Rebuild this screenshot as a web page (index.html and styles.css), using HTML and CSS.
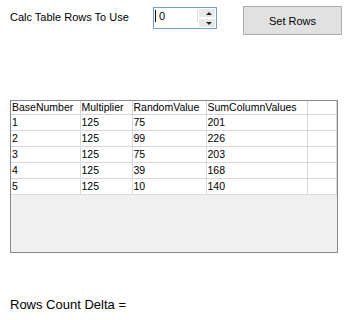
FILE: index.html
```html
<!DOCTYPE html>
<html lang="en">
<head>
  <meta charset="UTF-8" />
  <title>Calc Table</title>
  <link rel="stylesheet" href="styles.css">
</head>
<body>

  <!-- Top controls -->
  <div class="controls">
    <label class="caption" for="rows">Calc Table Rows To Use</label>
    <div class="spinner">
      <input type="text" id="rows" value="0" />
      <div class="spin-btns">
        <span class="spin up"></span>
        <span class="spin down"></span>
      </div>
    </div>
    <button class="btn">Set Rows</button>
  </div>

  <!-- Data grid -->
  <div class="grid">
    <table>
      <colgroup>
        <col class="c1" /><col class="c2" /><col class="c3" /><col class="c4" /><col />
      </colgroup>
      <thead>
        <tr><th>BaseNumber</th><th>Multiplier</th><th>RandomValue</th><th>SumColumnValues</th><th></th></tr>
      </thead>
      <tbody>
        <tr><td>1</td><td>125</td><td>75</td><td>201</td><td></td></tr>
        <tr><td>2</td><td>125</td><td>99</td><td>226</td><td></td></tr>
        <tr><td>3</td><td>125</td><td>75</td><td>203</td><td></td></tr>
        <tr><td>4</td><td>125</td><td>39</td><td>168</td><td></td></tr>
        <tr><td>5</td><td>125</td><td>10</td><td>140</td><td></td></tr>
      </tbody>
    </table>
  </div>

  <div class="delta">Rows Count Delta =</div>

</body>
</html>
```

FILE: styles.css
```css
* {
  box-sizing: border-box;
}
body {
  font-family: 'Liberation Sans', Arial, sans-serif;
  margin: 0;
  padding: 0;
  background: #fff;
  color: #000;
}

/* Top controls */
.controls {
  display: flex;
  align-items: flex-start;
  padding: 6px 0 0 10px;
  height: 35px;
}
.caption {
  width: 143px;
  font-size: 11px;
  margin-top: 5px;
}
.spinner {
  display: flex;
  width: 64px;
  height: 22px;
  margin-top: 1px;
  border: 1px solid #6d9fd6;
}
.spinner input {
  width: 43px;
  border: none;
  border-right: 1px solid #dcdcdc;
  padding: 0 0 0 3px;
  font-family: inherit;
  font-size: 11px;
  outline: none;
  border-left: 1px solid #000;
  margin-left: 1px;
  height: 12px;
  margin-top: 2px;
  line-height: 12px;
}
.spin-btns {
  display: flex;
  flex-direction: column;
  flex: 1;
}
.spin {
  flex: 1;
  background: #e8e8e8;
  border: 1px solid #fff;
  position: relative;
}
.spin::after {
  content: '';
  position: absolute;
  left: 7px;
  width: 0;
  height: 0;
  border-left: 3px solid transparent;
  border-right: 3px solid transparent;
}
.spin.up::after {
  top: 3px;
  border-bottom: 3px solid #222;
}
.spin.down::after {
  top: 3px;
  border-top: 3px solid #222;
}

.btn {
  margin-left: 26px;
  width: 99px;
  height: 29px;
  background: #e1e1e1;
  border: 1px solid #adadad;
  font-family: inherit;
  font-size: 11px;
  color: #000;
  padding: 0;
}

/* Data grid */
.grid {
  margin: 65px 0 0 10px;
  width: 328px;
  height: 153px;
  border: 1px solid #828790;
  background: #f0f0f0;
}
table {
  border-collapse: collapse;
  width: 100%;
  font-size: 10.5px;
  table-layout: fixed;
}
.c1 { width: 69px; }
.c2 { width: 52px; }
.c3 { width: 74px; }
.c4 { width: 101px; }
th, td {
  background: #fff;
  text-align: left;
  font-weight: normal;
  padding: 0 0 0 1px;
  white-space: nowrap;
  overflow: hidden;
  border: 1px solid #d9d9d9;
}
th {
  height: 13px;
  line-height: 11px;
  border-top: none;
  border-color: #d5d5d5;
}
td {
  height: 16px;
  line-height: 14px;
}
th:first-child, td:first-child {
  border-left: none;
}

.delta {
  margin: 44px 0 0 10px;
  font-size: 13px;
}
```
